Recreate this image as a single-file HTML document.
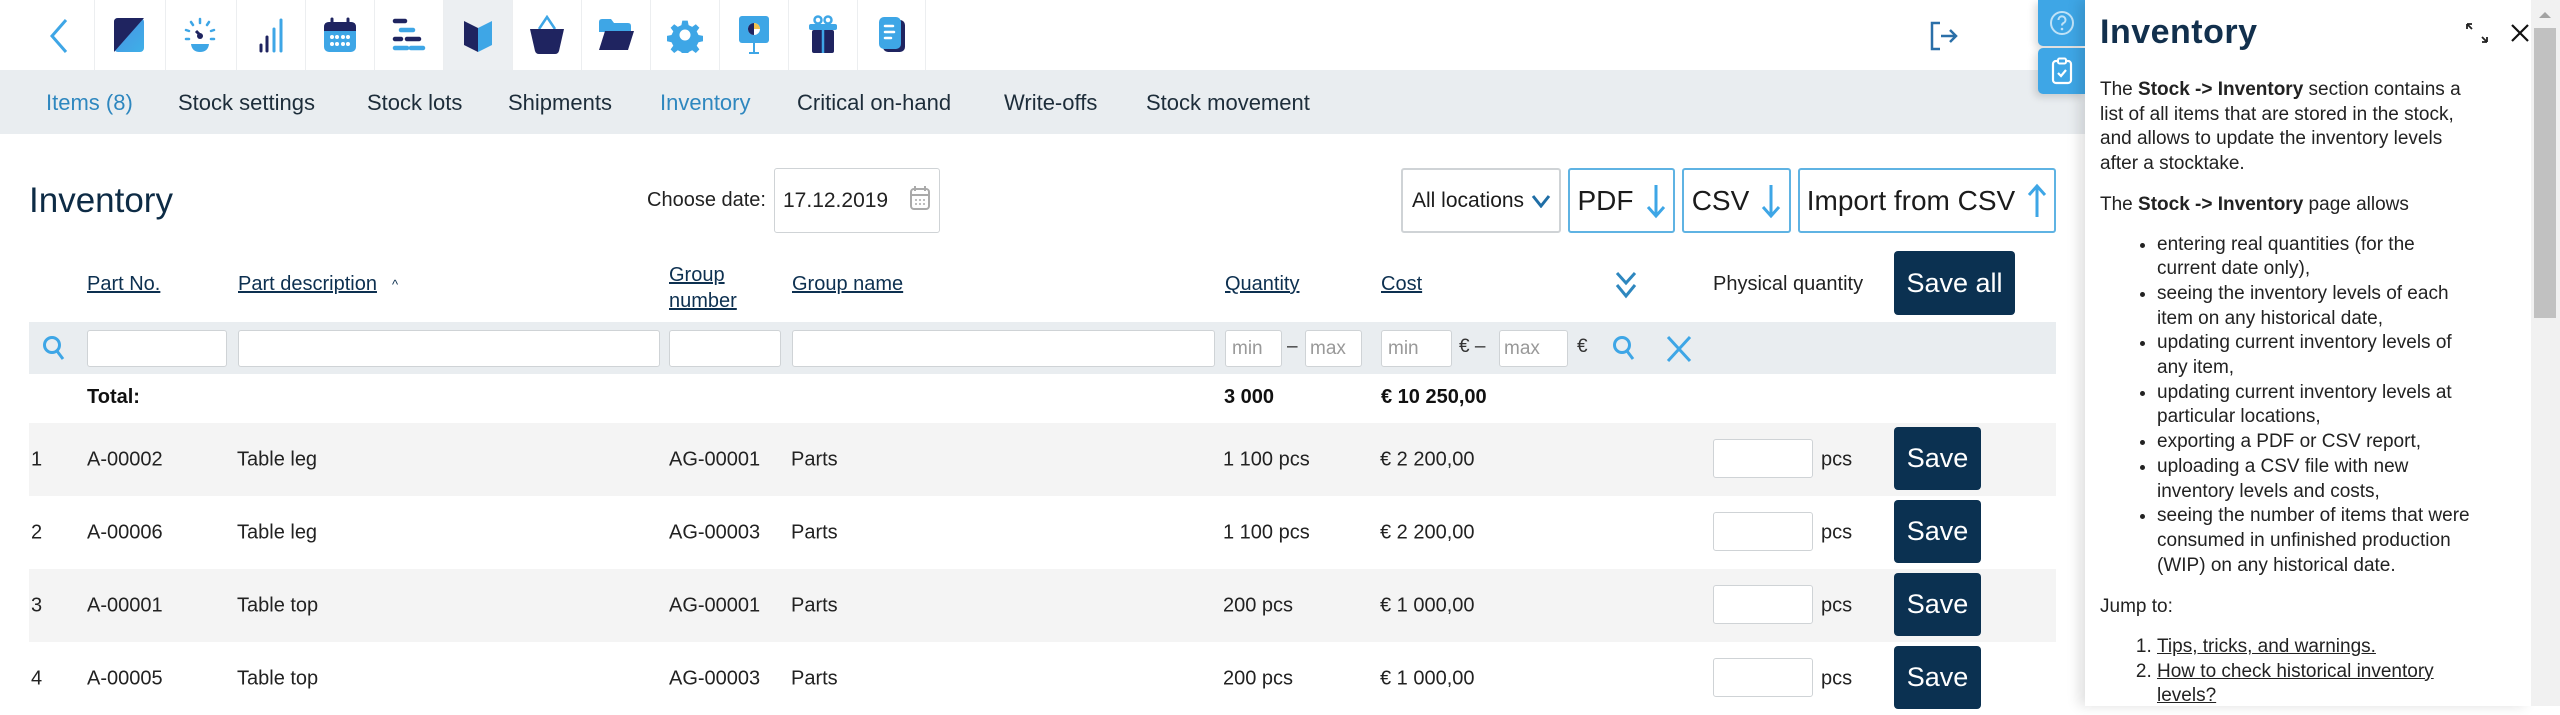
<!DOCTYPE html>
<html><head><meta charset="utf-8"><style>
*{box-sizing:border-box;margin:0;padding:0}
body{width:2560px;height:706px;overflow:hidden;background:#fff;font-family:"Liberation Sans",sans-serif;color:#1c1c1c;position:relative}
.a{position:absolute;white-space:nowrap}
.tile{position:absolute;top:0;width:69px;height:70px;border-left:1px solid #eceef0;display:flex;align-items:center;justify-content:center}
.nav{position:absolute;top:70px;left:0;width:2085px;height:64px;background:#e9edf0}
.nav span{position:absolute;top:20px;font-size:22px;color:#1d2d3a}
.inp{position:absolute;background:#fff;border:1.5px solid #cfd3d6;border-radius:3px}
.hd{font-size:20px;color:#0d3050;text-decoration:underline}
.btn{position:absolute;border:2px solid #5fb3e3;border-radius:3px;background:#fff;font-size:28px;color:#1b1b1b;display:flex;align-items:center;justify-content:center}
.save{position:absolute;background:#0b3151;color:#fff;border-radius:4px;font-size:27px;display:flex;align-items:center;justify-content:center}
.row{position:absolute;left:29px;width:2027px;height:73px}
.c{position:absolute;font-size:20px;color:#222;top:50%;transform:translateY(-50%)}
.help{position:absolute;left:2085px;top:0;width:446px;height:706px;background:#fff;box-shadow:-6px 0 12px rgba(0,0,0,.12);font-size:19px;color:#222;line-height:24.7px}
.help p,.help li{white-space:nowrap}
</style></head><body>

<svg class="a" style="left:46px;top:17px" width="26" height="38" viewBox="0 0 26 38"><path d="M20 3 L6 19 L20 35" fill="none" stroke="#3ea6e6" stroke-width="3"/></svg>

<div class="tile" style="left:94px"><svg width="34" height="36" viewBox="0 0 34 36"><defs><linearGradient id="g1" x1="0" y1="0" x2="1" y2="1"><stop offset="0" stop-color="#4a90e2"/><stop offset="1" stop-color="#3eb0e8"/></linearGradient></defs><rect x="2" y="1" width="30" height="34" rx="4" fill="url(#g1)"/><path d="M6 1 H32 L2 35 V5 Q2 1 6 1Z" fill="#1f2460"/></svg></div>
<div class="tile" style="left:165px"><svg width="36" height="36" viewBox="0 0 36 36"><g stroke="#3ea6e6" stroke-width="2.5" stroke-linecap="round"><path d="M18 2v4M9 5l2 3M27 5l-2 3M4 13l3 1M32 13l-3 1M4 22h3M29 22h3"/></g><path d="M14 14l6 6" stroke="#1f2460" stroke-width="3"/><circle cx="18" cy="19" r="3" fill="#1f2460"/><path d="M9 27h18q-1 8-9 8t-9-8z" fill="#3ea6e6"/></svg></div>
<div class="tile" style="left:236px"><svg width="30" height="36" viewBox="0 0 30 36"><g stroke-width="3" stroke-linecap="round"><path d="M5 34v-6" stroke="#1f2460"/><path d="M11 34v-14" stroke="#1f2460"/><path d="M18 34v-22" stroke="#3ea6e6"/><path d="M25 34v-31" stroke="#3ea6e6"/></g></svg></div>
<div class="tile" style="left:305px"><svg width="36" height="36" viewBox="0 0 36 36"><rect x="2" y="5" width="32" height="30" rx="5" fill="#3ea6e6"/><path d="M2 10q0-5 5-5h22q5 0 5 5v4H2z" fill="#1f2460"/><path d="M10 2v7M26 2v7" stroke="#1f2460" stroke-width="3" stroke-linecap="round"/><g fill="#fff"><circle cx="10" cy="20" r="2"/><circle cx="15" cy="20" r="2"/><circle cx="21" cy="20" r="2"/><circle cx="26" cy="20" r="2"/><circle cx="10" cy="27" r="2"/><circle cx="15" cy="27" r="2"/><circle cx="21" cy="27" r="2"/><circle cx="26" cy="27" r="2"/></g></svg></div>
<div class="tile" style="left:374px"><svg width="36" height="36" viewBox="0 0 36 36"><g stroke-width="4.5" stroke-linecap="round"><path d="M4 4h10" stroke="#1f2460"/><path d="M10 13h12" stroke="#3ea6e6"/><path d="M4 22h6M16 22h12" stroke="#1f2460"/><path d="M4 31h12M20 31h12" stroke="#3ea6e6"/></g></svg></div>
<div class="tile" style="left:443px;background:#eceff2"><svg width="32" height="36" viewBox="0 0 32 36"><path d="M2 4l14 7v24L2 28z" fill="#1f2460"/><path d="M30 4L16 11v24l14-7z" fill="#3ea6e6"/></svg></div>
<div class="tile" style="left:512px"><svg width="38" height="40" viewBox="0 0 38 40"><path d="M11 14L19 2l8 12" fill="none" stroke="#3ea6e6" stroke-width="2.5"/><path d="M2 14h34l-5 22q-1 3-4 3H11q-3 0-4-3z" fill="#1f2460"/></svg></div>
<div class="tile" style="left:581px"><svg width="38" height="34" viewBox="0 0 38 34"><path d="M2 4q0-3 3-3h9l3 4h14q3 0 3 3v6H2z" fill="#3ea6e6"/><path d="M8 13h29l-6 19H2z" fill="#1f2460"/></svg></div>
<div class="tile" style="left:650px"><svg width="36" height="36" viewBox="0 0 36 36"><path d="M15 2h6l1 5 4 2 4-3 4 4-3 4 2 4 5 1v6l-5 1-2 4 3 4-4 4-4-3-4 2-1 5h-6l-1-5-4-2-4 3-4-4 3-4-2-4-5-1v-6l5-1 2-4-3-4 4-4 4 3 4-2z" transform="scale(.9) translate(2 2)" fill="#3ea6e6"/><circle cx="18" cy="18" r="5.5" fill="#fff"/></svg></div>
<div class="tile" style="left:719px"><svg width="34" height="40" viewBox="0 0 34 40"><rect x="2" y="1" width="30" height="27" rx="3" fill="#3ea6e6"/><circle cx="17" cy="14" r="6" fill="#fff"/><path d="M17 8v6h6a6 6 0 0 0-6-6z" fill="#f2c14e"/><path d="M17 14v-6a6 6 0 0 0 0 12z" fill="#1f2460"/><path d="M17 28v9M12 38h10" stroke="#3ea6e6" stroke-width="2"/></svg></div>
<div class="tile" style="left:788px"><svg width="32" height="40" viewBox="0 0 32 40"><circle cx="11" cy="5" r="3.5" fill="none" stroke="#3ea6e6" stroke-width="2.5"/><circle cx="21" cy="5" r="3.5" fill="none" stroke="#3ea6e6" stroke-width="2.5"/><rect x="2" y="9" width="28" height="6" rx="2" fill="#3ea6e6"/><rect x="5" y="15" width="22" height="23" rx="2" fill="#1f2460"/><path d="M16 9v29" stroke="#3ea6e6" stroke-width="2.5"/></svg></div>
<div class="tile" style="left:857px;border-right:1px solid #eceef0"><svg width="30" height="38" viewBox="0 0 30 38"><rect x="6" y="4" width="22" height="32" rx="5" fill="#1f2460"/><rect x="2" y="1" width="22" height="32" rx="5" fill="#3ea6e6"/><path d="M8 10h8M8 16h9M8 22h6" stroke="#fff" stroke-width="2.5" stroke-linecap="round"/></svg></div>

<svg class="a" style="left:1928px;top:20px" width="32" height="32" viewBox="0 0 32 32"><path d="M12 3H4v26h8" fill="none" stroke="#2a6fa8" stroke-width="2.5"/><path d="M13 16h15M22 10l6 6-6 6" fill="none" stroke="#2a6fa8" stroke-width="2.5"/></svg>

<div class="nav">
<span style="left:46px;color:#2e87bf">Items (8)</span>
<span style="left:178px">Stock settings</span>
<span style="left:367px">Stock lots</span>
<span style="left:508px">Shipments</span>
<span style="left:660px;color:#2e87bf">Inventory</span>
<span style="left:797px">Critical on-hand</span>
<span style="left:1004px">Write-offs</span>
<span style="left:1146px">Stock movement</span>
</div>

<div class="a" style="left:29px;top:181px;font-size:35px;color:#0d2b45">Inventory</div>
<div class="a" style="left:647px;top:189px;font-size:20px;color:#222">Choose date:</div>
<div class="inp" style="left:774px;top:168px;width:166px;height:65px"></div>
<div class="a" style="left:783px;top:189px;font-size:21px;color:#222">17.12.2019</div>
<svg class="a" style="left:909px;top:184px" width="22" height="28" viewBox="0 0 22 28"><rect x="2" y="5" width="18" height="20" rx="3" fill="none" stroke="#aaa" stroke-width="2"/><path d="M6 2v5M16 2v5M2 11h18" stroke="#aaa" stroke-width="2"/><g fill="#aaa"><circle cx="7" cy="16" r="1"/><circle cx="11" cy="16" r="1"/><circle cx="15" cy="16" r="1"/><circle cx="7" cy="20" r="1"/><circle cx="11" cy="20" r="1"/><circle cx="15" cy="20" r="1"/></g></svg>

<div class="btn" style="left:1401px;top:168px;width:160px;height:65px;border-color:#cfd3d6;font-size:21px;justify-content:flex-start;padding-left:9px">All locations<svg style="margin-left:7px" width="20" height="14" viewBox="0 0 20 14"><path d="M2 2l8 10 8-10" fill="none" stroke="#1f6ea6" stroke-width="3"/></svg></div>
<div class="btn" style="left:1568px;top:168px;width:107px;height:65px">PDF<svg style="margin-left:12px" width="20" height="36" viewBox="0 0 20 36"><path d="M10 2v31M2 24l8 9 8-9" fill="none" stroke="#3ea6e6" stroke-width="3"/></svg></div>
<div class="btn" style="left:1682px;top:168px;width:109px;height:65px">CSV<svg style="margin-left:12px" width="20" height="36" viewBox="0 0 20 36"><path d="M10 2v31M2 24l8 9 8-9" fill="none" stroke="#3ea6e6" stroke-width="3"/></svg></div>
<div class="btn" style="left:1798px;top:168px;width:258px;height:65px">Import from CSV<svg style="margin-left:12px" width="20" height="36" viewBox="0 0 20 36"><path d="M10 34V3M2 12l8-9 8 9" fill="none" stroke="#3ea6e6" stroke-width="3"/></svg></div>

<div class="a hd" style="left:87px;top:273px">Part No.</div>
<div class="a hd" style="left:238px;top:273px">Part description</div>
<div class="a" style="left:392px;top:277px;font-size:13px;color:#0d3050">^</div>
<div class="a hd" style="left:669px;top:262px;line-height:26px">Group<br>number</div>
<div class="a hd" style="left:792px;top:273px">Group name</div>
<div class="a hd" style="left:1225px;top:273px">Quantity</div>
<div class="a hd" style="left:1381px;top:273px">Cost</div>
<svg class="a" style="left:1614px;top:270px" width="24" height="30" viewBox="0 0 24 30"><path d="M3 3l9 10 9-10M3 15l9 11 9-11" fill="none" stroke="#2e87bf" stroke-width="3"/></svg>
<div class="a" style="left:1713px;top:273px;font-size:20px;color:#222">Physical quantity</div>
<div class="save" style="left:1894px;top:251px;width:121px;height:64px">Save all</div>

<div class="a" style="left:29px;top:322px;width:2027px;height:52px;background:#e9edf0"></div>
<svg class="a" style="left:42px;top:335px" width="24" height="26" viewBox="0 0 24 26"><circle cx="10" cy="10" r="7.5" fill="none" stroke="#3ea6e6" stroke-width="3"/><path d="M15 16l6 8" stroke="#3ea6e6" stroke-width="3"/></svg>
<div class="inp" style="left:87px;top:330px;width:140px;height:37px"></div>
<div class="inp" style="left:238px;top:330px;width:422px;height:37px"></div>
<div class="inp" style="left:669px;top:330px;width:112px;height:37px"></div>
<div class="inp" style="left:792px;top:330px;width:423px;height:37px"></div>
<div class="inp" style="left:1225px;top:330px;width:57px;height:37px"></div>
<div class="a" style="left:1232px;top:338px;font-size:19px;color:#999">min</div>
<div class="a" style="left:1287px;top:336px;font-size:19px;color:#333">–</div>
<div class="inp" style="left:1305px;top:330px;width:57px;height:37px"></div>
<div class="a" style="left:1310px;top:338px;font-size:19px;color:#999">max</div>
<div class="inp" style="left:1381px;top:330px;width:71px;height:37px"></div>
<div class="a" style="left:1388px;top:338px;font-size:19px;color:#999">min</div>
<div class="a" style="left:1459px;top:336px;font-size:19px;color:#333">€ –</div>
<div class="inp" style="left:1499px;top:330px;width:69px;height:37px"></div>
<div class="a" style="left:1504px;top:338px;font-size:19px;color:#999">max</div>
<div class="a" style="left:1577px;top:336px;font-size:19px;color:#333">€</div>
<svg class="a" style="left:1612px;top:335px" width="24" height="26" viewBox="0 0 24 26"><circle cx="10" cy="10" r="7.5" fill="none" stroke="#3ea6e6" stroke-width="3"/><path d="M15 16l6 8" stroke="#3ea6e6" stroke-width="3"/></svg>
<svg class="a" style="left:1666px;top:335px" width="26" height="28" viewBox="0 0 26 28"><path d="M2 2l22 24M24 2L2 26" stroke="#3ea6e6" stroke-width="3"/></svg>

<div class="a" style="left:87px;top:386px;font-size:20px;font-weight:bold;color:#111">Total:</div>
<div class="a" style="left:1224px;top:386px;font-size:20px;font-weight:bold;color:#111">3 000</div>
<div class="a" style="left:1381px;top:386px;font-size:20px;font-weight:bold;color:#111">€ 10 250,00</div>

<div class="row" style="top:423px;background:#f4f4f4"><span class="c" style="left:2px">1</span><span class="c" style="left:58px">A-00002</span><span class="c" style="left:208px">Table leg</span><span class="c" style="left:640px">AG-00001</span><span class="c" style="left:762px">Parts</span><span class="c" style="left:1194px">1 100 pcs</span><span class="c" style="left:1351px">€ 2 200,00</span><div class="inp" style="left:1684px;top:16px;width:100px;height:39px"></div><span class="c" style="left:1792px">pcs</span><div class="save" style="left:1865px;top:4px;width:87px;height:63px">Save</div></div>
<div class="row" style="top:496px;background:#fff"><span class="c" style="left:2px">2</span><span class="c" style="left:58px">A-00006</span><span class="c" style="left:208px">Table leg</span><span class="c" style="left:640px">AG-00003</span><span class="c" style="left:762px">Parts</span><span class="c" style="left:1194px">1 100 pcs</span><span class="c" style="left:1351px">€ 2 200,00</span><div class="inp" style="left:1684px;top:16px;width:100px;height:39px"></div><span class="c" style="left:1792px">pcs</span><div class="save" style="left:1865px;top:4px;width:87px;height:63px">Save</div></div>
<div class="row" style="top:569px;background:#f4f4f4"><span class="c" style="left:2px">3</span><span class="c" style="left:58px">A-00001</span><span class="c" style="left:208px">Table top</span><span class="c" style="left:640px">AG-00001</span><span class="c" style="left:762px">Parts</span><span class="c" style="left:1194px">200 pcs</span><span class="c" style="left:1351px">€ 1 000,00</span><div class="inp" style="left:1684px;top:16px;width:100px;height:39px"></div><span class="c" style="left:1792px">pcs</span><div class="save" style="left:1865px;top:4px;width:87px;height:63px">Save</div></div>
<div class="row" style="top:642px;background:#fff"><span class="c" style="left:2px">4</span><span class="c" style="left:58px">A-00005</span><span class="c" style="left:208px">Table top</span><span class="c" style="left:640px">AG-00003</span><span class="c" style="left:762px">Parts</span><span class="c" style="left:1194px">200 pcs</span><span class="c" style="left:1351px">€ 1 000,00</span><div class="inp" style="left:1684px;top:16px;width:100px;height:39px"></div><span class="c" style="left:1792px">pcs</span><div class="save" style="left:1865px;top:4px;width:87px;height:63px">Save</div></div>

<div class="a" style="left:2038px;top:0;width:47px;height:46px;background:#3ea6e6;border-radius:0 0 0 5px;box-shadow:-3px 3px 8px rgba(0,0,0,.15)"><svg style="position:absolute;left:11px;top:10px" width="26" height="26" viewBox="0 0 26 26"><circle cx="13" cy="13" r="11" fill="none" stroke="#bfe2f7" stroke-width="2"/><path d="M9.5 10a3.5 3.5 0 1 1 5 3c-1 .6-1.5 1.2-1.5 2.5" fill="none" stroke="#bfe2f7" stroke-width="2"/><circle cx="13" cy="19" r="1.3" fill="#bfe2f7"/></svg></div>
<div class="a" style="left:2038px;top:48px;width:47px;height:46px;background:#3ea6e6;border-radius:5px 0 0 5px;box-shadow:-3px 3px 8px rgba(0,0,0,.15)"><svg style="position:absolute;left:13px;top:9px" width="22" height="28" viewBox="0 0 22 28"><rect x="2" y="4" width="18" height="22" rx="3" fill="none" stroke="#fff" stroke-width="2.2"/><rect x="7" y="1.5" width="8" height="5" rx="1.5" fill="#3ea6e6" stroke="#fff" stroke-width="2"/><path d="M7 16l3 3 5-6" fill="none" stroke="#fff" stroke-width="2.2"/></svg></div>

<div class="help">
<div class="a" style="left:15px;top:20px;font-size:34px;font-weight:bold;color:#12304d;letter-spacing:.5px">Inventory</div>
<svg class="a" style="left:380px;top:22px" width="24" height="22" viewBox="0 0 24 22"><path d="M2 2h5M2 2v5M2 2l5 5M22 20h-5M22 20v-5M22 20l-5-5" fill="none" stroke="#222" stroke-width="1.8"/></svg>
<svg class="a" style="left:424px;top:22px" width="22" height="22" viewBox="0 0 22 22"><path d="M3 3l16 16M19 3L3 19" stroke="#111" stroke-width="2.2"/></svg>
<div class="a" style="left:15px;top:78px">
<p>The <b>Stock -&gt; Inventory</b> section contains a<br>list of all items that are stored in the stock,<br>and allows to update the inventory levels<br>after a stocktake.</p>
<p style="margin-top:16px">The <b>Stock -&gt; Inventory</b> page allows</p>
<ul style="margin-top:15px;padding-left:57px">
<li>entering real quantities (for the<br>current date only),</li>
<li>seeing the inventory levels of each<br>item on any historical date,</li>
<li>updating current inventory levels of<br>any item,</li>
<li>updating current inventory levels at<br>particular locations,</li>
<li>exporting a PDF or CSV report,</li>
<li>uploading a CSV file with new<br>inventory levels and costs,</li>
<li>seeing the number of items that were<br>consumed in unfinished production<br>(WIP) on any historical date.</li>
</ul>
<p style="margin-top:17px">Jump to:</p>
<ol style="margin-top:15px;padding-left:57px">
<li><u>Tips, tricks, and warnings.</u></li>
<li><u>How to check historical inventory<br>levels?</u></li>
</ol>
</div>
</div>

<div class="a" style="left:2531px;top:0;width:29px;height:706px;background:#f1f1f1"></div>
<svg class="a" style="left:2538px;top:10px" width="14" height="9" viewBox="0 0 14 9"><path d="M1 8l6-6 6 6z" fill="#a3a3a3"/></svg>
<div class="a" style="left:2534px;top:28px;width:22px;height:290px;background:#c1c1c1"></div>
</body></html>
